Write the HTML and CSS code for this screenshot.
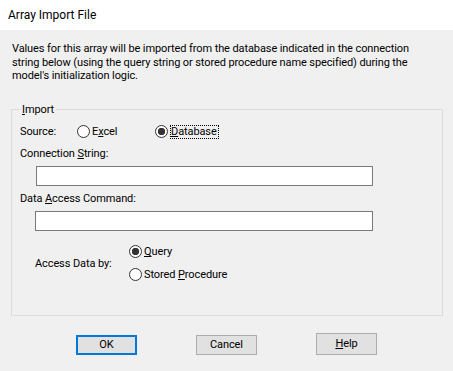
FILE: index.html
```html
<!DOCTYPE html>
<html>
<head>
<meta charset="utf-8">
<link rel="stylesheet" href="styles.css">
</head>
<body>
<div class="dialog">
  <div class="titlebar">Array Import File</div>
  <p class="desc">Values for this array will be imported from the database indicated in the connection<br>string below (using the query string or stored procedure name specified) during the<br>model's initialization logic.</p>
  <fieldset class="group">
    <legend class="legend"><u>I</u>mport</legend>
    <div class="source-row">
      <span class="source-label">Source:</span>
      <span class="option opt-excel"><span class="radio"></span><span>E<u>x</u>cel</span></span>
      <span class="option"><span class="radio checked"></span><span class="focus"><u>D</u>atabase</span></span>
    </div>
    <div class="label label-conn">Connection <u>S</u>tring:</div>
    <div class="input input-conn"></div>
    <div class="label label-cmd">Data <u>A</u>ccess Command:</div>
    <div class="input input-cmd"></div>
    <div class="access-row">
      <span class="access-label">Access Data by:</span>
      <div class="access-options">
        <span class="option"><span class="radio checked"></span><span><u>Q</u>uery</span></span>
        <span class="option"><span class="radio"></span><span>Stored <u>P</u>rocedure</span></span>
      </div>
    </div>
  </fieldset>
  <div class="buttons">
    <div class="btn btn-default">OK</div>
    <div class="btn btn-cancel">Cancel</div>
    <div class="btn btn-help"><u>H</u>elp</div>
  </div>
</div>
</body>
</html>
```
FILE: styles.css
```css
html, body {
  margin: 0;
  padding: 0;
}
body {
  background: #f0f0f0;
  font-family: Roboto, "Noto Sans", sans-serif;
  font-size: 11px;
  letter-spacing: -0.1px;
  color: #000;
  width: 453px;
  height: 371px;
  overflow: hidden;
}
.dialog {
  width: 453px;
  height: 371px;
}
.titlebar {
  height: 30px;
  line-height: 30px;
  background: #fff;
  padding-left: 8px;
  font-size: 12px;
  letter-spacing: 0;
}
.desc {
  margin: 0;
  padding: 12px 12px 0 12px;
  line-height: 13.5px;
  white-space: nowrap;
}
.group {
  box-sizing: border-box;
  margin: 20px 0 0 11px;
  padding: 0;
  width: 432px;
  height: 213px;
  border: 1px solid #dcdcdc;
  min-width: 0;
}
.legend {
  margin-left: 8px;
  padding: 0 2px;
  line-height: 14px;
}
.source-row {
  display: flex;
  align-items: center;
  height: 14px;
  margin-top: 8px;
  padding-left: 8px;
}
.source-label {
  width: 57px;
}
.option {
  display: flex;
  align-items: center;
  height: 14px;
}
.opt-excel {
  width: 78px;
}
.radio {
  box-sizing: border-box;
  width: 13px;
  height: 13px;
  border: 1px solid #333;
  border-radius: 50%;
  background: #fff;
  margin-right: 2px;
  flex: none;
}
.radio.checked {
  background: radial-gradient(circle, #333 0, #333 3.4px, #fff 4px);
}
.focus {
  border: 1px dotted #000;
  padding: 0 1px 0 0;
  line-height: 12px;
}
.label {
  height: 14px;
  line-height: 14px;
  padding-left: 8px;
}
.label-conn {
  margin-top: 8px;
}
.label-cmd {
  margin-top: 6px;
}
.input {
  box-sizing: border-box;
  height: 20px;
  border: 1px solid #7a7a7a;
  background: #fff;
  margin-top: 5px;
}
.input-conn {
  margin-left: 24px;
  width: 337px;
}
.input-cmd {
  margin-left: 23px;
  width: 338px;
}
.access-row {
  display: flex;
  align-items: center;
  margin-top: 14px;
  margin-left: 23px;
}
.access-label {
  width: 94px;
}
.access-options {
  display: flex;
  flex-direction: column;
  gap: 9px;
}
.buttons {
  display: flex;
  align-items: flex-start;
  margin: 17px 0 0 76px;
  gap: 59px;
}
.btn {
  box-sizing: border-box;
  width: 61px;
  height: 20px;
  margin-top: 2px;
  background: #e1e1e1;
  border: 1px solid #adadad;
  display: flex;
  align-items: center;
  justify-content: center;
}
.btn-default {
  border: 2px solid #0078d7;
}
.btn-help {
  height: 22px;
  margin-top: 0;
}
```
